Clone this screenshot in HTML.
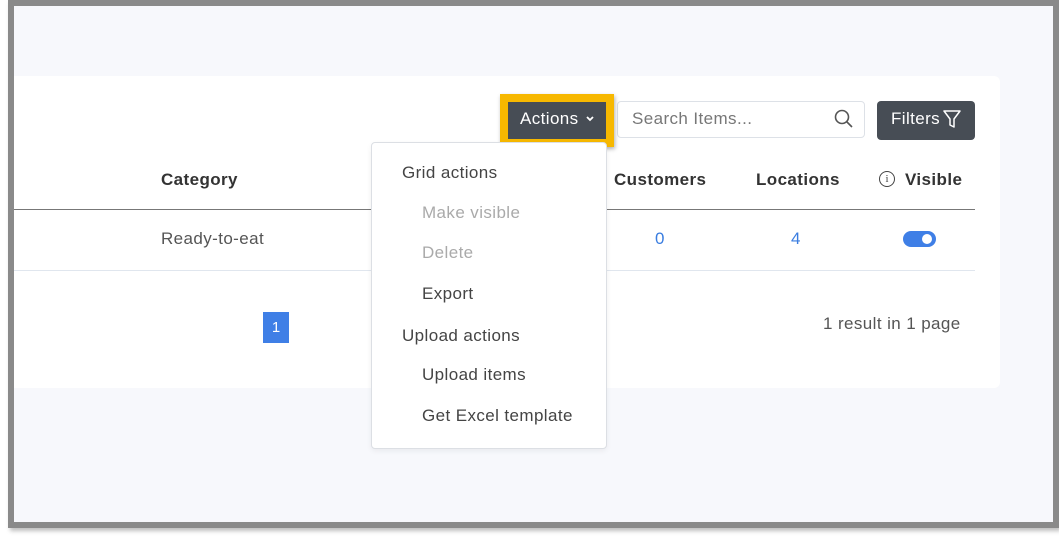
<!DOCTYPE html>
<html><head><style>
body{margin:0;width:1059px;height:536px;background:#fff;position:relative;overflow:hidden;font-family:"Liberation Sans",sans-serif;}
.frame{position:absolute;left:8px;top:0;width:1051px;height:528px;background:#8a8a8a;box-shadow:2px 3px 4px rgba(0,0,0,.25);}
.inner{position:absolute;left:6px;top:6px;width:1039px;height:516px;background:#f7f8fc;overflow:hidden;}
.card{position:absolute;left:0;top:70px;width:986px;height:312px;background:#fff;border-radius:0 6px 6px 0;}
.t{position:absolute;font-size:17px;letter-spacing:0.4px;color:#444;white-space:nowrap;}
.b{font-weight:bold;color:#333;}
.link{color:#3a7de0;}
</style></head><body>
<div class="frame"><div class="inner">
<div class="card">
  <div style="position:absolute;left:0;top:133px;width:961px;height:1px;background:#777"></div>
  <div style="position:absolute;left:0;top:194px;width:961px;height:1px;background:#e0e6ee"></div>
  <div class="t b" style="left:147px;top:94px;">Category</div>
  <div class="t b" style="left:600px;top:94px;">Customers</div>
  <div class="t b" style="left:742px;top:94px;">Locations</div>
  <div style="position:absolute;left:865px;top:95px;width:14px;height:14px;border:1px solid #444;border-radius:50%;font-size:11px;line-height:14px;text-align:center;color:#444;font-family:'Liberation Serif',serif">i</div>
  <div class="t b" style="left:891px;top:94px;">Visible</div>
  <div class="t" style="left:147px;top:153px;color:#555">Ready-to-eat</div>
  <div class="t link" style="left:641px;top:153px;">0</div>
  <div class="t link" style="left:777px;top:153px;">4</div>
  <div style="position:absolute;left:889px;top:155px;width:33px;height:16px;border-radius:8px;background:#3f7fe6"><div style="position:absolute;right:4px;top:3px;width:10px;height:10px;border-radius:50%;background:#fff"></div></div>
  <div style="position:absolute;left:249px;top:236px;width:26px;height:31px;background:#3f7fe6;color:#fff;font-size:15px;line-height:31px;text-align:center">1</div>
  <div class="t" style="left:809px;top:238px;color:#555">1 result in 1 page</div>
  <div style="position:absolute;left:603px;top:25px;width:248px;height:37px;border:1px solid #dde1e7;border-radius:4px;box-sizing:border-box"></div>
  <div class="t" style="left:618px;top:33px;color:#777">Search Items...</div>
  <svg style="position:absolute;left:820px;top:33px" width="20" height="20" viewBox="0 0 20 20"><circle cx="8" cy="8" r="6.5" fill="none" stroke="#555" stroke-width="1.6"/><path d="M13 13l5 5" stroke="#555" stroke-width="1.6"/></svg>
  <div style="position:absolute;left:863px;top:25px;width:98px;height:39px;background:#474d55;border-radius:4px"></div>
  <div class="t" style="left:877px;top:33px;color:#fff">Filters</div>
  <svg style="position:absolute;left:929px;top:34px" width="18" height="19" viewBox="0 0 18 19"><path d="M1 1h16l-6 8v8l-4-2V9z" fill="none" stroke="#fff" stroke-width="1.5" stroke-linejoin="round"/></svg>
  <div style="position:absolute;left:486px;top:18px;width:114px;height:53px;background:#f7b800;box-shadow:1px 2px 4px rgba(0,0,0,.3)"></div>
  <div style="position:absolute;left:494px;top:26px;width:98px;height:37px;background:#474d55"></div>
  <div class="t" style="left:506px;top:33px;color:#fff">Actions</div>
  <svg style="position:absolute;left:571px;top:38px" width="10" height="10" viewBox="0 0 10 10"><path d="M2 3l3 3 3-3" fill="none" stroke="#fff" stroke-width="1.8"/></svg>
</div>
<div style="position:absolute;left:357px;top:136px;width:236px;height:307px;background:#fff;border:1px solid #dcdfe4;border-radius:4px;box-sizing:border-box;box-shadow:0 2px 6px rgba(0,0,0,.06)">
  <div class="t" style="left:30px;top:20px;">Grid actions</div>
  <div class="t" style="left:50px;top:60px;color:#aaa">Make visible</div>
  <div class="t" style="left:50px;top:100px;color:#aaa">Delete</div>
  <div class="t" style="left:50px;top:141px;">Export</div>
  <div class="t" style="left:30px;top:183px;">Upload actions</div>
  <div class="t" style="left:50px;top:222px;">Upload items</div>
  <div class="t" style="left:50px;top:263px;">Get Excel template</div>
</div>
</div></div>
</body></html>
